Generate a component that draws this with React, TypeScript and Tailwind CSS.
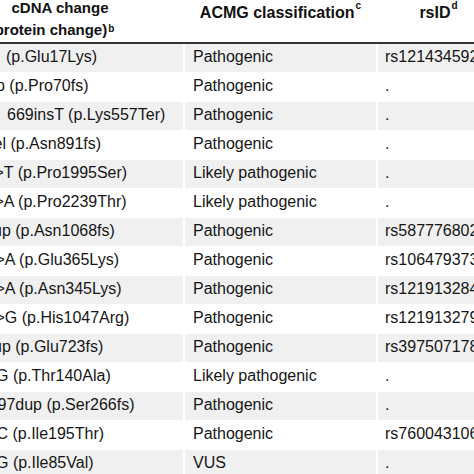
const rows = [
  { cdna: "(p.Glu17Lys)", shift: "ml-[6px]", acmg: "Pathogenic", rsid: "rs121434592" },
  { cdna: "p (p.Pro70fs)", shift: "-ml-[4px]", acmg: "Pathogenic", rsid: "." },
  { cdna: "669insT (p.Lys557Ter)", shift: "ml-[7px]", acmg: "Pathogenic", rsid: "." },
  { cdna: "el (p.Asn891fs)", shift: "-ml-[6.5px]", acmg: "Pathogenic", rsid: "." },
  { cdna: ">T (p.Pro1995Ser)", shift: "-ml-[5.5px]", acmg: "Likely pathogenic", rsid: "." },
  { cdna: ">A (p.Pro2239Thr)", shift: "-ml-[5.5px]", acmg: "Likely pathogenic", rsid: "." },
  { cdna: "up (p.Asn1068fs)", shift: "-ml-[7px]", acmg: "Pathogenic", rsid: "rs587776802" },
  { cdna: ">A (p.Glu365Lys)", shift: "-ml-[4.5px]", acmg: "Pathogenic", rsid: "rs106479373" },
  { cdna: ">A (p.Asn345Lys)", shift: "-ml-[4.5px]", acmg: "Pathogenic", rsid: "rs121913284" },
  { cdna: ">G (p.His1047Arg)", shift: "-ml-[4.5px]", acmg: "Pathogenic", rsid: "rs121913279" },
  { cdna: "up (p.Glu723fs)", shift: "-ml-[7px]", acmg: "Pathogenic", rsid: "rs397507178" },
  { cdna: "G (p.Thr140Ala)", shift: "-ml-[4px]", acmg: "Likely pathogenic", rsid: "." },
  { cdna: "97dup (p.Ser266fs)", shift: "-ml-[2.5px]", acmg: "Pathogenic", rsid: "." },
  { cdna: "C (p.Ile195Thr)", shift: "-ml-[3.5px]", acmg: "Pathogenic", rsid: "rs760043106" },
  { cdna: "G (p.Ile85Val)", shift: "-ml-[4px]", acmg: "VUS", rsid: "." },
];

const cell = "h-[28px] pb-[3px] flex items-center overflow-hidden whitespace-nowrap shrink-0";

export default function App() {
  return (
    <div className="w-[474px] h-[474px] overflow-hidden bg-white text-[16px] text-[#161616] font-['Liberation_Sans',Arial,sans-serif]">
      <div className="w-[500px]">
        {/* header */}
        <div className="flex gap-[2px] h-[44px] border-b-2 border-[#333] font-bold text-[#111]">
          <div className="w-[183px] shrink-0 overflow-hidden text-[15px] leading-[22px] whitespace-nowrap -mt-[3px]">
            <div className="-ml-[65px] w-[250px] text-center">cDNA change</div>
            <div className="-ml-[73px] w-[250px] text-center">
              (protein change)
              <sup className="text-[10px] top-[-3px] ml-[1px]">b</sup>
            </div>
          </div>
          <div className="w-[191px] shrink-0 pt-[2px] text-center leading-[22px] whitespace-nowrap">
            ACMG classification
            <sup className="text-[10px] top-[-9px] ml-[1px]">c</sup>
          </div>
          <div className="w-[121px] shrink-0 pt-[2px] text-center leading-[22px]">
            rsID
            <sup className="text-[10px] top-[-9px] ml-[1px]">d</sup>
          </div>
        </div>

        {/* body */}
        {rows.map((r, i) => {
          const bg = i % 2 === 0 ? "bg-[#f0f0f0]" : "bg-white";
          return (
            <div key={i} className="flex gap-[2px] mb-px">
              <div className={`${cell} ${bg} w-[183px]`}>
                <span className={r.shift}>{r.cdna}</span>
              </div>
              <div className={`${cell} ${bg} w-[191px] pl-[8px]`}>{r.acmg}</div>
              <div className={`${cell} ${bg} w-[121px] pl-[7px]`}>{r.rsid}</div>
            </div>
          );
        })}
      </div>
    </div>
  );
}
